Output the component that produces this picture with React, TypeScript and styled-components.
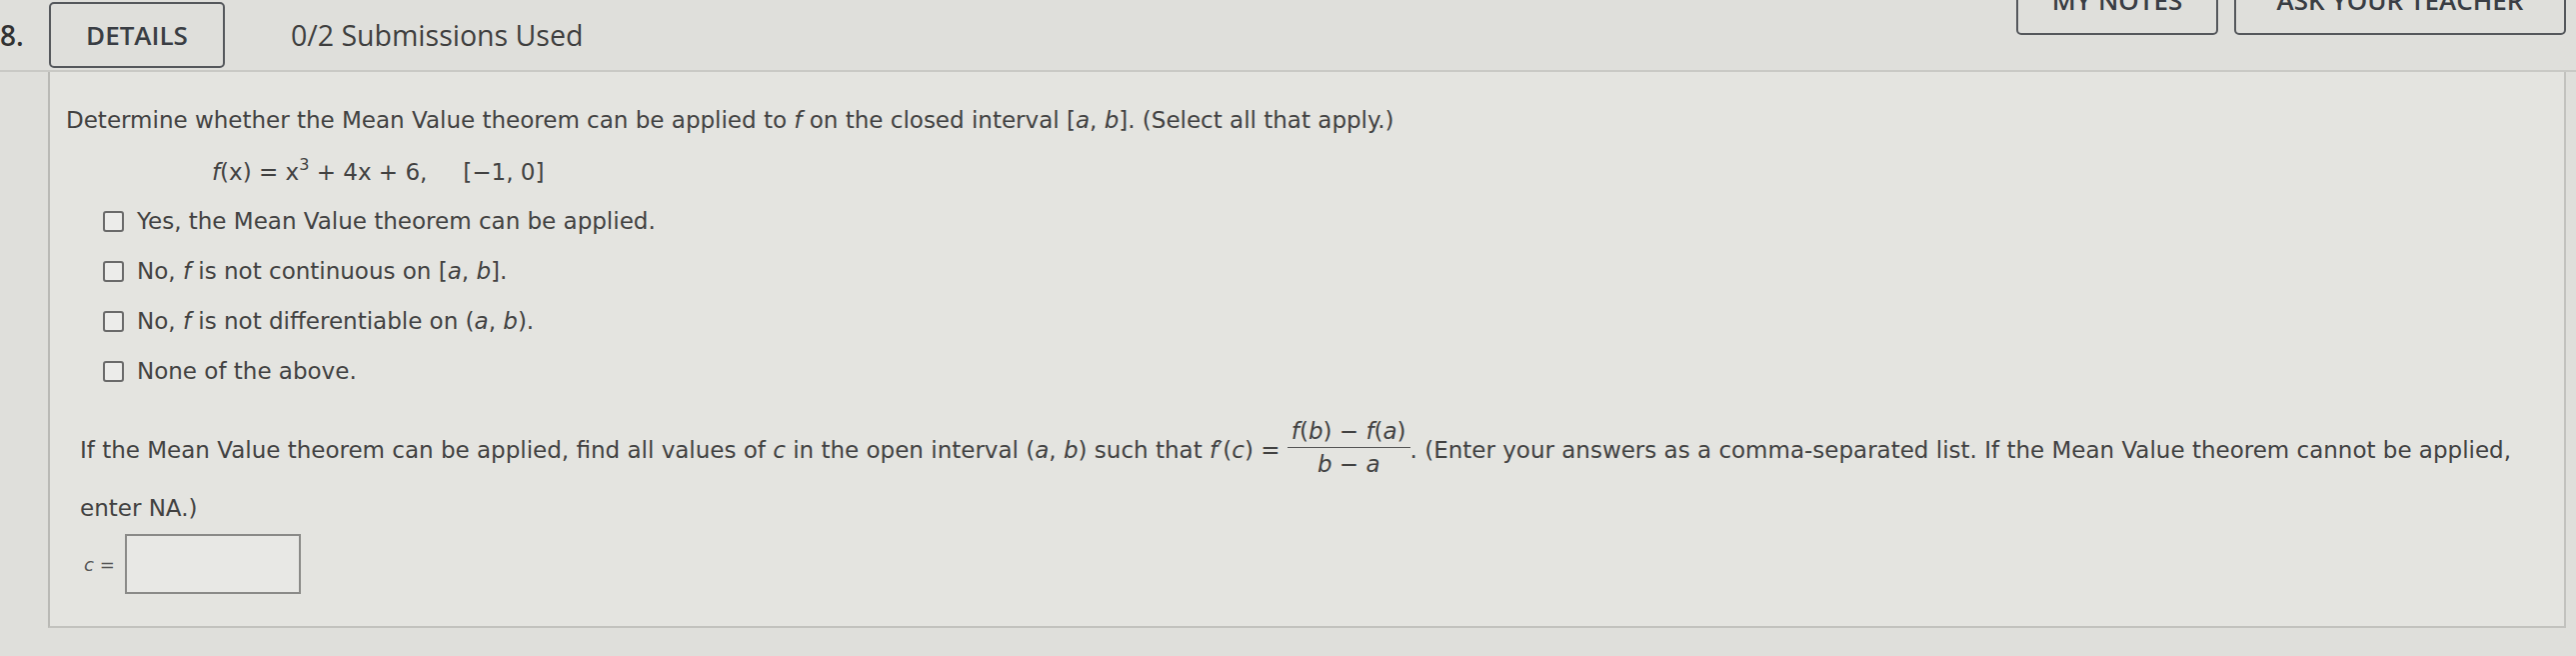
import React from 'react';
import styled, { createGlobalStyle } from 'styled-components';

const GlobalStyle = createGlobalStyle`
  html, body {
    margin: 0;
    padding: 0;
    background: #dfdfdb;
    overflow: hidden;
  }
`;

const App = () => {
  const options = [
    { id: 'yes', label: <>Yes, the Mean Value theorem can be applied.</> },
    {
      id: 'cont',
      label: (
        <>
          No, <Var>f</Var> is not continuous on [<Var>a</Var>, <Var>b</Var>].
        </>
      ),
    },
    {
      id: 'diff',
      label: (
        <>
          No, <Var>f</Var> is not differentiable on (<Var>a</Var>, <Var>b</Var>).
        </>
      ),
    },
    { id: 'none', label: <>None of the above.</> },
  ];

  return (
    <Page>
      <GlobalStyle />
      <Header>
        <QNumber>8.</QNumber>
        <DetailsButton>DETAILS</DetailsButton>
        <Submissions>0/2 Submissions Used</Submissions>
        <HeaderActions>
          <TopButton $width={202}>MY NOTES</TopButton>
          <TopButton $width={332}>ASK YOUR TEACHER</TopButton>
        </HeaderActions>
      </Header>
      <Body>
        <Panel>
          <Prompt>
            Determine whether the Mean Value theorem can be applied to <Var>f</Var> on the closed
            interval [<Var>a</Var>, <Var>b</Var>]. (Select all that apply.)
          </Prompt>
          <Formula>
            <Var>f</Var>(x) = x<sup>3</sup> + 4x + 6,<Gap />[−1, 0]
          </Formula>
          <OptionList>
            {options.map((opt) => (
              <OptionRow key={opt.id}>
                <CheckBox />
                <span>{opt.label}</span>
              </OptionRow>
            ))}
          </OptionList>
          <SecondPrompt>
            If the Mean Value theorem can be applied, find all values of <Var>c</Var> in the open
            interval (<Var>a</Var>, <Var>b</Var>) such that <Var>f</Var>′(<Var>c</Var>) ={' '}
            <Fraction>
              <Numer>
                <Var>f</Var>(<Var>b</Var>) − <Var>f</Var>(<Var>a</Var>)
              </Numer>
              <Denom>
                <Var>b</Var> − <Var>a</Var>
              </Denom>
            </Fraction>
            <span>
              . (Enter your answers as a comma-separated list. If the Mean Value theorem cannot be
              applied,
            </span>{' '}
            <span>enter NA.)</span>
          </SecondPrompt>
          <AnswerRow>
            <AnswerLabel>
              <Var>c</Var> =
            </AnswerLabel>
            <AnswerInput />
          </AnswerRow>
        </Panel>
      </Body>
    </Page>
  );
};

const Page = styled.div`
  width: 2577px;
  height: 656px;
  background: #dfdfdb;
  color: #3c3c3c;
  overflow: hidden;
`;

const Header = styled.div`
  display: flex;
  align-items: center;
  height: 70px;
  border-bottom: 2px solid #c9c9c5;
  font-family: 'Open Sans', 'Liberation Sans', sans-serif;
`;

const QNumber = styled.div`
  width: 34px;
  font-size: 28px;
  font-weight: 600;
  color: #333;
`;

const DetailsButton = styled.div`
  width: 176px;
  height: 66px;
  margin-left: 15px;
  box-sizing: border-box;
  border: 2.5px solid #55585c;
  border-radius: 5px;
  display: flex;
  align-items: center;
  justify-content: center;
  font-size: 26px;
  font-weight: 600;
  color: #3a3e44;
`;

const Submissions = styled.div`
  margin-left: 66px;
  font-size: 28.5px;
  color: #3f3f3f;
`;

const HeaderActions = styled.div`
  margin-left: auto;
  margin-right: 10px;
  align-self: flex-start;
  margin-top: -29px;
  display: flex;
  gap: 16px;
`;

const TopButton = styled.div<{ $width: number }>`
  width: ${(p) => p.$width}px;
  height: 64px;
  box-sizing: border-box;
  border: 2.5px solid #55585c;
  border-radius: 5px;
  display: flex;
  align-items: flex-end;
  justify-content: center;
  padding-bottom: 20px;
  font-size: 26px;
  font-weight: 600;
  line-height: 26px;
  color: #3a3e44;
`;

const Body = styled.div`
  padding-left: 48px;
  padding-right: 10px;
`;

const Panel = styled.div`
  height: 556px;
  box-sizing: border-box;
  border-left: 2px solid #b9b9b5;
  border-right: 2px solid #c2c2be;
  border-bottom: 2px solid #c2c2be;
  background: #e4e4e0;
  padding: 34px 0 0 16px;
  font-family: 'DejaVu Sans', Verdana, sans-serif;
  font-size: 23px;
  color: #424242;
`;

const Var = styled.i`
  font-style: italic;
`;

const Prompt = styled.div`
  line-height: 28px;
`;

const Formula = styled.div`
  margin-top: 24px;
  margin-left: 146px;
  line-height: 28px;

  sup {
    font-size: 16px;
    line-height: 0;
    vertical-align: 10px;
  }
`;

const Gap = styled.span`
  display: inline-block;
  width: 36px;
`;

const OptionList = styled.div`
  margin-top: 21px;
  margin-left: 37px;
  display: flex;
  flex-direction: column;
  gap: 22px;
`;

const OptionRow = styled.div`
  display: flex;
  align-items: center;
  gap: 13px;
  line-height: 28px;
`;

const CheckBox = styled.span`
  width: 17px;
  height: 17px;
  border: 2px solid #6a6a6a;
  border-radius: 3px;
  background: #ececea;
  flex-shrink: 0;
`;

const SecondPrompt = styled.div`
  margin-top: 36px;
  margin-left: 14px;
  margin-right: 20px;
  line-height: 52px;
`;

const Fraction = styled.span`
  display: inline-flex;
  flex-direction: column;
  align-items: center;
  vertical-align: middle;
  line-height: 28px;
  position: relative;
  top: -4px;
`;

const Numer = styled.span`
  padding: 0 4px 2px;
  border-bottom: 1.5px solid #555;
`;

const Denom = styled.span`
  padding-top: 2px;
`;

const AnswerRow = styled.div`
  margin-top: 0;
  margin-left: 18px;
  display: flex;
  align-items: center;
  gap: 10px;
`;

const AnswerLabel = styled.span`
  font-size: 18px;
  color: #555;
`;

const AnswerInput = styled.div`
  width: 176px;
  height: 60px;
  box-sizing: border-box;
  border: 2px solid #8a8a88;
  background: #e8e8e5;
`;

export default App;
